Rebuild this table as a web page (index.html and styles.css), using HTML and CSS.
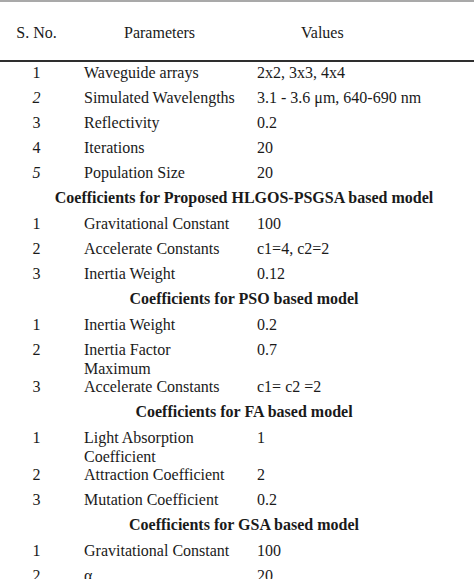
FILE: index.html
```html
<!DOCTYPE html>
<html>
<head>
<meta charset="utf-8">
<link rel="stylesheet" href="styles.css">
</head>
<body>
<div class="table">
  <div class="head">
    <div class="hc sno">S. No.</div>
    <div class="hc hparam">Parameters</div>
    <div class="hc hval">Values</div>
  </div>
  <div class="body">
    <div class="row"><div class="c n">1</div><div class="c">Waveguide arrays</div><div class="c">2x2, 3x3, 4x4</div></div>
    <div class="row"><div class="c n it">2</div><div class="c">Simulated Wavelengths</div><div class="c">3.1 - 3.6 μm, 640-690 nm</div></div>
    <div class="row"><div class="c n">3</div><div class="c">Reflectivity</div><div class="c">0.2</div></div>
    <div class="row"><div class="c n">4</div><div class="c">Iterations</div><div class="c">20</div></div>
    <div class="row"><div class="c n it">5</div><div class="c">Population Size</div><div class="c">20</div></div>
    <div class="sec">Coefficients for Proposed HLGOS-PSGSA based model</div>
    <div class="row"><div class="c n">1</div><div class="c">Gravitational Constant</div><div class="c">100</div></div>
    <div class="row"><div class="c n">2</div><div class="c">Accelerate Constants</div><div class="c">c1=4, c2=2</div></div>
    <div class="row"><div class="c n">3</div><div class="c">Inertia Weight</div><div class="c">0.12</div></div>
    <div class="sec">Coefficients for PSO based model</div>
    <div class="row"><div class="c n">1</div><div class="c">Inertia Weight</div><div class="c">0.2</div></div>
    <div class="row tall"><div class="c n">2</div><div class="c">Inertia Factor<br>Maximum</div><div class="c">0.7</div></div>
    <div class="row"><div class="c n">3</div><div class="c">Accelerate Constants</div><div class="c">c1= c2 =2</div></div>
    <div class="sec">Coefficients for FA based model</div>
    <div class="row tall"><div class="c n">1</div><div class="c">Light Absorption<br>Coefficient</div><div class="c">1</div></div>
    <div class="row"><div class="c n">2</div><div class="c">Attraction Coefficient</div><div class="c">2</div></div>
    <div class="row"><div class="c n">3</div><div class="c">Mutation Coefficient</div><div class="c">0.2</div></div>
    <div class="sec">Coefficients for GSA based model</div>
    <div class="row"><div class="c n">1</div><div class="c">Gravitational Constant</div><div class="c">100</div></div>
    <div class="row"><div class="c n">2</div><div class="c">α</div><div class="c">20</div></div>
  </div>
</div>
</body>
</html>
```

FILE: styles.css
```css
html, body {
  margin: 0;
  padding: 0;
  background: #ffffff;
}
body {
  font-family: "Liberation Serif", "Times New Roman", serif;
  font-size: 16px;
  color: #1a1a1a;
  overflow: hidden;
}
.table {
  border-top: 2px solid #a9a9a9;
}
.head {
  display: flex;
  height: 58px;
  align-items: center;
  border-bottom: 2px solid #2e2e2e;
  line-height: 19px;
}
.hc {
  padding-top: 2px;
}
.sno {
  width: 73px;
  text-align: center;
}
.hparam {
  padding-left: 51px;
  width: 130px;
}
.hval {
  padding-left: 47px;
}
.row {
  display: grid;
  grid-template-columns: 84px 173px 1fr;
  height: 25px;
  line-height: 19px;
}
.row.tall {
  height: 37px;
}
.c {
  padding-top: 1px;
  white-space: nowrap;
}
.c.n {
  text-align: center;
  padding-right: 11px;
}
.it {
  font-style: italic;
}
.sec {
  height: 26px;
  line-height: 19px;
  padding-top: 1px;
  box-sizing: border-box;
  text-align: center;
  padding-left: 14px;
  font-weight: bold;
}
```
